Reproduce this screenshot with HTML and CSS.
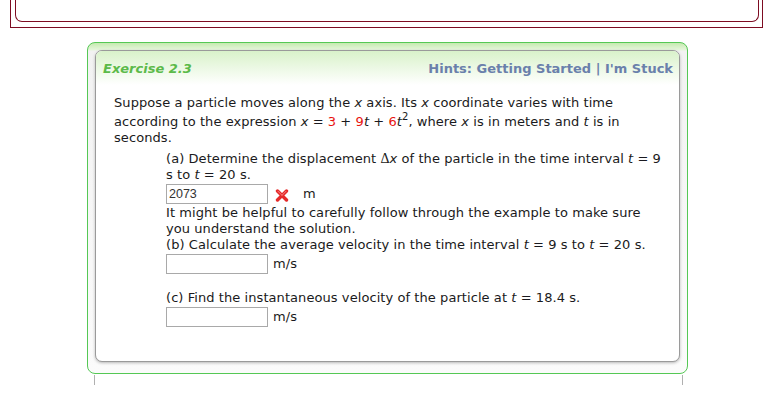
FILE: index.html
```html
<!DOCTYPE html>
<html>
<head>
<meta charset="utf-8">
<link rel="stylesheet" href="styles.css">
</head>
<body>
<div class="topframe"><div class="topinner"></div></div>
<div class="panel">
  <div class="card">
    <div class="head">
      <span class="ex">Exercise 2.3</span>
      <span class="hints">Hints: Getting Started | I'm Stuck</span>
    </div>
    <div class="body">
      <p class="intro">Suppose a particle moves along the <i>x</i> axis. Its <i>x</i> coordinate varies with time<br>according to the expression <i>x</i> = <span class="r">3</span> + <span class="r">9</span><i>t</i> + <span class="r">6</span><i>t</i><sup>2</sup>, where <i>x</i> is in meters and <i>t</i> is in<br>seconds.</p>
      <div class="parts">
        <p>(a) Determine the displacement <span class="delta">Δ</span><i>x</i> of the particle in the time interval <i>t</i> = 9<br>s to <i>t</i> = 20 s.</p>
        <div class="ans">
          <input class="inp" type="text" value="2073">
          <svg class="wrong" width="14" height="13" viewBox="0 0 14 13"><path d="M2.5 2 L11.5 11 M11.5 2 L2.5 11" stroke="#e52a2a" stroke-width="3.4" stroke-linecap="round"/><path d="M3 2.3 L7 6.3 M11 2.3 L7 6.3" stroke="#f58080" stroke-width="1" stroke-linecap="round"/></svg>
          <span class="unit m">m</span>
        </div>
        <p>It might be helpful to carefully follow through the example to make sure<br>you understand the solution.</p>
        <p class="q">(b) Calculate the average velocity in the time interval <i>t</i> = 9 s to <i>t</i> = 20 s.</p>
        <div class="ans">
          <input class="inp" type="text" value="">
          <span class="unit">m/s</span>
        </div>
        <p class="q gap">(c) Find the instantaneous velocity of the particle at <i>t</i> = 18.4 s.</p>
        <div class="ans">
          <input class="inp" type="text" value="">
          <span class="unit">m/s</span>
        </div>
      </div>
    </div>
  </div>
</div>
<div class="below"></div>
</body>
</html>
```

FILE: styles.css
```css
html, body {
  margin: 0;
  background: #fff;
}
body {
  font-family: "DejaVu Sans", Verdana, sans-serif;
  color: #1a1a20;
}
.topframe {
  height: 28px;
  box-sizing: border-box;
  margin: 0 5px 0 10px;
  border: 1px solid #7d0c22;
  border-top: 0;
  padding: 0 3px 5px 4px;
}
.topinner {
  height: 100%;
  box-sizing: border-box;
  border: 1px solid #7d0c22;
  border-top: 0;
  border-radius: 0 0 7px 7px;
}
.panel {
  margin: 14px 0 0 87px;
  width: 601px;
  box-sizing: border-box;
  border: 1px solid #55c855;
  border-radius: 8px;
  padding: 7px 7px 11px;
  background: linear-gradient(to bottom, #c6eab0 0, #e6f6dc 7px, #f2f2f2 8px, #fbfbfb 100%);
}
.card {
  border: 1px solid #9a9a9a;
  border-radius: 7px;
  background: #fff;
  box-shadow: 0 1px 3px #b8b8b8;
  overflow: hidden;
}
.head {
  height: 34px;
  box-sizing: border-box;
  padding: 10px 6px 0 7px;
  display: flex;
  justify-content: space-between;
  background: linear-gradient(to bottom, #d9f2ca, #ffffff);
  font-weight: bold;
  font-size: 13px;
  line-height: 16px;
}
.ex {
  font-style: italic;
  color: #5cba4a;
}
.hints {
  color: #6a80ab;
}
.body {
  padding: 10px 0 33px 18px;
  font-size: 13px;
  line-height: 16px;
  letter-spacing: 0.07px;
}
p {
  margin: 0;
  white-space: nowrap;
}
.intro {
  margin-bottom: 5px;
}
sup {
  font-size: 10px;
  line-height: 12px;
  vertical-align: 6px;
}
.r {
  color: #e8130f;
}
.delta {
  font-family: "Liberation Serif", "DejaVu Serif", serif;
  font-size: 14px;
}
.parts {
  margin-left: 52px;
}
.ans {
  display: flex;
  align-items: center;
  height: 20px;
  margin: 1px 0;
}
.inp {
  width: 102px;
  height: 20px;
  box-sizing: border-box;
  margin: 0;
  padding: 0 2px;
  border: 1px solid #a9a9a9;
  font-family: "Liberation Sans", Arial, sans-serif;
  font-size: 12.5px;
  letter-spacing: 0;
  color: #333;
  background: #fff;
  outline: none;
}
.wrong {
  margin: 3px 0 0 7px;
}
.unit {
  margin-left: 5px;
}
.unit.m {
  margin-left: 14px;
}
.gap {
  margin-top: 16px;
}
.below {
  margin: 1px 0 0 94px;
  width: 587px;
  height: 10px;
  border-left: 1px solid #b0b0b0;
  border-right: 1px solid #b0b0b0;
}
```
